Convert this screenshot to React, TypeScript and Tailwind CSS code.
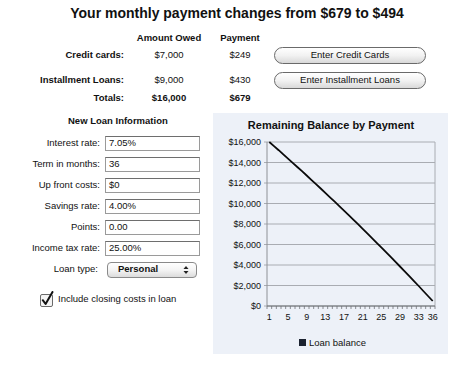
import React from 'react';

const font = { fontFamily: '"Liberation Sans", Arial, Helvetica, sans-serif' };

function balances() {
  const r = 0.0705 / 12;
  const n = 36;
  const pmt = (16000 * r) / (1 - Math.pow(1 + r, -n));
  const out: number[] = [];
  let b = 16000;
  for (let i = 0; i < n; i++) {
    out.push(b);
    b = b * (1 + r) - pmt;
  }
  return out;
}

function Chart() {
  const left = 54;
  const right = 222;
  const top = 29;
  const bottom = 193;
  const step = (bottom - top) / 8;
  const cw = (right - left) / 36;
  const data = balances();
  const pts = data
    .map((b, i) => `${(left + (i + 0.5) * cw).toFixed(1)},${(bottom - (b / 16000) * (bottom - top)).toFixed(1)}`)
    .join(' ');
  const xl = [1, 5, 9, 13, 17, 21, 25, 29, 33, 36];

  return (
    <svg width="235" height="241" viewBox="0 0 235 241" style={font}>
      <text x="118" y="16" textAnchor="middle" fontSize="11" fontWeight="bold" fill="#111">
        Remaining Balance by Payment
      </text>
      {Array.from({ length: 9 }).map((_, k) => {
        const y = bottom - k * step;
        return (
          <g key={k}>
            <line x1={left - 3} x2={right} y1={y} y2={y} stroke="#a9acb2" strokeWidth="1" />
            <text x="48" y={y + 3.2} textAnchor="end" fontSize="9" fill="#111">
              {k === 0 ? '$0' : `$${(k * 2).toLocaleString('en-US')},000`}
            </text>
          </g>
        );
      })}
      <line x1={left} x2={left} y1={top} y2={bottom} stroke="#8e9196" strokeWidth="1" />
      <line x1={right} x2={right} y1={top} y2={bottom} stroke="#a9acb2" strokeWidth="1" />
      <line x1={left} x2={right} y1={bottom} y2={bottom} stroke="#6f7277" strokeWidth="1" />
      {Array.from({ length: 37 }).map((_, i) => (
        <line key={i} x1={left + i * cw} x2={left + i * cw} y1={bottom} y2={bottom + 3} stroke="#6f7277" strokeWidth="0.8" />
      ))}
      {xl.map((v) => (
        <text key={v} x={left + (v - 0.5) * cw} y="207" textAnchor="middle" fontSize="9" fill="#111">
          {v}
        </text>
      ))}
      <polyline points={pts} fill="none" stroke="#0a0a0a" strokeWidth="1.8" />
      <rect x="86" y="226" width="7" height="7" fill="#1b2230" />
      <text x="96" y="232.5" fontSize="9.5" fill="#111">
        Loan balance
      </text>
    </svg>
  );
}

function Field({ label, value }: { label: string; value: string }) {
  return (
    <div className="flex items-center h-[15px] mb-[6px]">
      <div className="w-[102px] text-right pr-[2px] text-[9.5px] text-[#111]">{label}</div>
      <div className="ml-[3px] w-[95px] h-[15px] bg-white border border-[#9a9a9a] border-t-[#6e6e6e] flex items-center pl-[3px] text-[9.5px] text-[#111]">
        {value}
      </div>
    </div>
  );
}

function PillButton({ label }: { label: string }) {
  return (
    <div className="ml-[8px] w-[152px] h-[17px] rounded-full border border-[#6a6a6a] bg-gradient-to-b from-white via-[#f2f2f2] to-[#d9d9d9] flex items-center justify-center text-[9.5px] text-[#111]">
      {label}
    </div>
  );
}

export default function App() {
  return (
    <div className="w-[474px] h-[366px] bg-white overflow-hidden text-[#111]" style={font}>
      <div className="h-[26px] leading-[26px] text-center text-[14px] font-bold">
        Your monthly payment changes from $679 to $494
      </div>

      <div className="mt-[4px]">
        <div className="flex h-[16px] items-center text-[9.5px] font-bold">
          <div className="w-[124px]" />
          <div className="w-[90px] text-center">Amount Owed</div>
          <div className="w-[52px] text-center">Payment</div>
        </div>
        <div className="flex h-[18px] items-center text-[9.5px]">
          <div className="w-[124px] text-right font-bold">Credit cards:</div>
          <div className="w-[90px] text-center">$7,000</div>
          <div className="w-[52px] text-center">$249</div>
          <PillButton label="Enter Credit Cards" />
        </div>
        <div className="flex h-[18px] mt-[7px] items-center text-[9.5px]">
          <div className="w-[124px] text-right font-bold">Installment Loans:</div>
          <div className="w-[90px] text-center">$9,000</div>
          <div className="w-[52px] text-center">$430</div>
          <PillButton label="Enter Installment Loans" />
        </div>
        <div className="flex h-[18px] items-center text-[9.5px] font-bold">
          <div className="w-[124px] text-right">Totals:</div>
          <div className="w-[90px] text-center">$16,000</div>
          <div className="w-[52px] text-center">$679</div>
        </div>
      </div>

      <div className="flex">
        <div className="w-[213px]">
          <div className="h-[16px] mt-[6px] leading-[16px] text-[9.5px] font-bold pl-[68px]">New Loan Information</div>
          <div className="mt-[7px]">
            <Field label="Interest rate:" value="7.05%" />
            <Field label="Term in months:" value="36" />
            <Field label="Up front costs:" value="$0" />
            <Field label="Savings rate:" value="4.00%" />
            <Field label="Points:" value="0.00" />
            <Field label="Income tax rate:" value="25.00%" />
            <div className="flex items-center h-[15px]">
              <div className="w-[100px] text-right pr-[2px] text-[9.5px]">Loan type:</div>
              <div className="ml-[7px] w-[90px] h-[16px] rounded-[4px] border border-[#8a8a8a] bg-gradient-to-b from-white via-[#f4f4f4] to-[#dcdcdc] flex items-center">
                <span className="pl-[10px] text-[9.5px] font-bold flex-1">Personal</span>
                <svg width="8" height="10" viewBox="0 0 8 10" className="mr-[6px]">
                  <path d="M4 1 L6.5 4 H1.5 Z" fill="#222" />
                  <path d="M4 9 L6.5 6 H1.5 Z" fill="#222" />
                </svg>
              </div>
            </div>
            <div className="flex items-center mt-[14px] pl-[40px] h-[16px]">
              <svg width="15" height="16" viewBox="0 0 15 16">
                <rect x="0.5" y="3.5" width="12" height="12" rx="1.5" fill="#f4f4f4" stroke="#6a6a6a" />
                <path d="M2.8 9.2 L5.6 13 L12.5 1" fill="none" stroke="#111" strokeWidth="2" strokeLinecap="round" strokeLinejoin="round" />
              </svg>
              <span className="ml-[3px] text-[9.5px]">Include closing costs in loan</span>
            </div>
          </div>
        </div>
        <div className="mt-[6px] w-[235px] h-[241px] bg-[#edf1f8]">
          <Chart />
        </div>
      </div>
    </div>
  );
}
